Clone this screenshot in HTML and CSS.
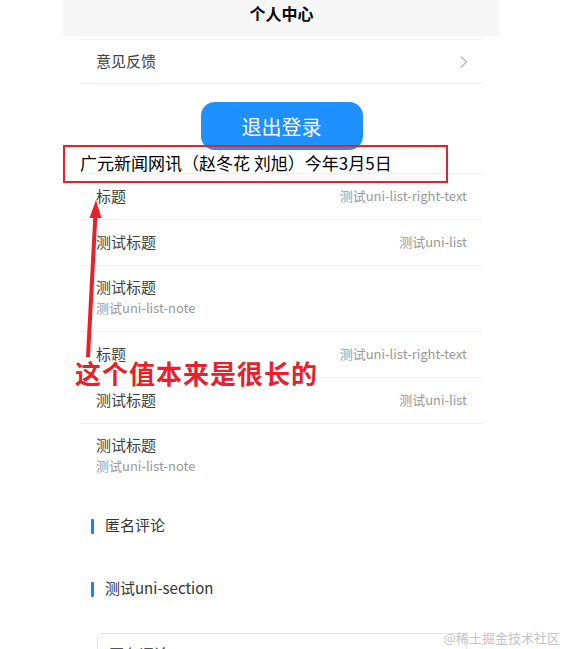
FILE: index.html
```html
<!DOCTYPE html>
<html lang="zh-CN">
<head>
<meta charset="utf-8">
<title>个人中心</title>
<link rel="stylesheet" href="styles.css">
</head>
<body>
<div class="page">
  <header class="navbar"><span class="nav-title">个人中心</span></header>
  <div class="content">
    <div class="cell">
      <span class="cell-title">意见反馈</span>
      <svg class="chev" width="9" height="14" viewBox="0 0 9 14"><path d="M1.5 1.5 L7.5 7 L1.5 12.5" fill="none" stroke="#b5b5b5" stroke-width="1.3"/></svg>
    </div>
    <div class="btn-row"><button class="logout">退出登录</button></div>
    <div class="news">广元新闻网讯（赵冬花 刘旭）今年3月5日</div>

    <div class="list">
      <div class="item"><span class="title">标题</span><span class="right">测试uni-list-right-text</span></div>
      <div class="item"><span class="title">测试标题</span><span class="right">测试uni-list</span></div>
      <div class="item item-note"><div class="col"><span class="title">测试标题</span><span class="note">测试uni-list-note</span></div></div>
    </div>
    <div class="list list2">
      <div class="item"><span class="title">标题</span><span class="right">测试uni-list-right-text</span></div>
      <div class="item"><span class="title">测试标题</span><span class="right">测试uni-list</span></div>
      <div class="item item-note last"><div class="col"><span class="title">测试标题</span><span class="note">测试uni-list-note</span></div></div>
    </div>

    <div class="section first"><span class="bar"></span><span class="sec-title">匿名评论</span></div>
    <div class="section"><span class="bar"></span><span class="sec-title">测试uni-section</span></div>
    <div class="textarea"><span class="placeholder">匿名评论</span></div>
  </div>

  <div class="redbox"></div>
  <svg class="arrow" width="40" height="180" viewBox="0 0 40 180">
    <line x1="8" y1="172" x2="15.5" y2="28" stroke="#e8202a" stroke-width="4"/>
    <polygon points="16,15 9.5,33 21.5,33" fill="#e8202a"/>
  </svg>
  <div class="note-red">这个值本来是很长的</div>
</div>
<div class="watermark">@稀土掘金技术社区</div>
</body>
</html>
```
FILE: styles.css
```css
html, body {
  margin: 0;
  padding: 0;
  overflow: hidden;
  background: #ffffff;
  font-family: "Noto Sans CJK SC", "Noto Sans", sans-serif;
}
.page {
  position: relative;
  width: 437px;
  margin-left: 63px;
}
.navbar {
  height: 36px;
  background: #f7f7f7;
  display: flex;
  justify-content: center;
  align-items: flex-start;
}
.nav-title {
  font-size: 16px;
  font-weight: bold;
  line-height: 27px;
  color: #000;
}
.content {
  padding: 3px 17px 0;
}
.cell {
  height: 43px;
  border-top: 1px solid #f2f2f2;
  border-bottom: 1px solid #f2f2f2;
  display: flex;
  align-items: center;
  justify-content: space-between;
  padding: 0 15px 0 16px;
}
.cell-title {
  font-size: 15px;
  line-height: 20px;
  padding-bottom: 1px;
  color: #3b4144;
}
.chev { display: block; }
.btn-row {
  display: flex;
  justify-content: center;
  margin-top: 18px;
}
.logout {
  width: 162px;
  height: 48px;
  border: none;
  border-radius: 14px;
  background: #1e90ff;
  color: #fff;
  font-family: inherit;
  font-size: 20px;
  padding: 0;
}
.news {
  margin-top: 3px;
  height: 20px;
  line-height: 20px;
  font-size: 17px;
  color: #000;
  white-space: nowrap;
}
.list {
  border-top: 1px solid #f0f0f0;
}
.list2 { border-top: none; }
.item {
  height: 45px;
  border-bottom: 1px solid #f0f0f0;
  display: flex;
  align-items: center;
  justify-content: space-between;
  padding: 0 16px;
}
.item > .title,
.item > .right {
  padding-bottom: 2px;
}
.item.item-note {
  height: 65px;
  align-items: flex-start;
}
.item.last { border-bottom: none; }
.col {
  display: flex;
  flex-direction: column;
  padding-top: 10px;
}
.title {
  font-size: 15px;
  line-height: 22px;
  color: #3b4144;
}
.right {
  font-size: 13px;
  color: #999;
}
.note {
  font-size: 13px;
  line-height: 20px;
  color: #999;
}
.section {
  height: 50px;
  margin-top: 13px;
  display: flex;
  align-items: center;
  padding-left: 11px;
}
.section.first { margin-top: 12px; }
.bar {
  width: 3px;
  height: 15px;
  background: #2979ff;
  border-radius: 1px;
  margin-right: 11px;
}
.sec-title {
  font-size: 15px;
  line-height: 20px;
  padding-bottom: 2px;
  color: #333;
}
.textarea {
  margin: 19px 0 0 17px;
  width: 346px;
  height: 60px;
  border: 1px solid #e5e5e5;
  border-radius: 5px;
  padding: 7px 11px;
}
.placeholder {
  font-size: 15px;
  line-height: 20px;
  color: #555;
}
.redbox {
  position: absolute;
  left: 0;
  top: 145px;
  width: 381px;
  height: 34px;
  border: 2px solid #e8202a;
}
.arrow {
  position: absolute;
  left: 17px;
  top: 185px;
}
.note-red {
  position: absolute;
  left: 12px;
  top: 358px;
  font-size: 26px;
  line-height: 30px;
  letter-spacing: 1px;
  font-weight: bold;
  color: #e8202a;
  white-space: nowrap;
  text-shadow: 0 0 2px #fff, 2px 2px 1px #fff, -2px -2px 1px #fff, 2px -2px 1px #fff, -2px 2px 1px #fff;
}
.watermark {
  position: absolute;
  right: 4px;
  top: 629px;
  font-size: 13px;
  line-height: 18px;
  color: #c4c4c4;
  white-space: nowrap;
}
```
